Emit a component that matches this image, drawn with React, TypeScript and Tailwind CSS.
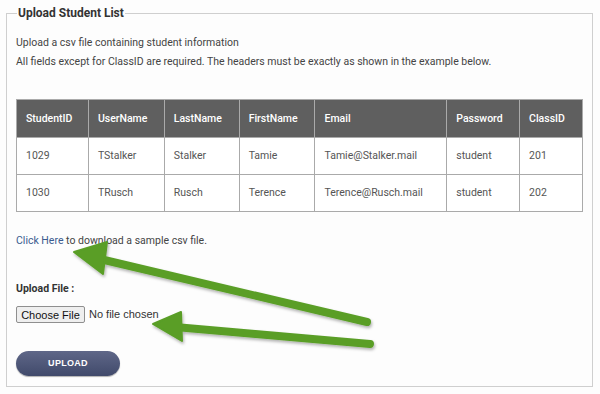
import React from "react";

const headers = ["StudentID", "UserName", "LastName", "FirstName", "Email", "Password", "ClassID"];
const widths = ["w-[72px]", "w-[76px]", "w-[75px]", "w-[76px]", "w-[132px]", "w-[73px]", "w-[63px]"];
const rows = [
  ["1029", "TStalker", "Stalker", "Tamie", "Tamie@Stalker.mail", "student", "201"],
  ["1030", "TRusch", "Rusch", "Terence", "Terence@Rusch.mail", "student", "202"],
];

const Arrows = () => (
  <svg className="absolute inset-0 pointer-events-none" width="600" height="394" viewBox="0 0 600 394">
    <defs>
      <filter id="sh" x="-10%" y="-50%" width="120%" height="200%">
        <feDropShadow dx="1" dy="2" stdDeviation="1.5" floodColor="#000" floodOpacity="0.3" />
      </filter>
    </defs>
    <g fill="#5a9e28" stroke="#5a9e28" strokeLinecap="round" strokeLinejoin="round" filter="url(#sh)">
      <line x1="100" y1="259" x2="367" y2="322" strokeWidth="8" />
      <polygon points="74,252 107,242 103,274" strokeWidth="2" />
      <line x1="175" y1="327" x2="370" y2="344" strokeWidth="8" />
      <polygon points="153,324 181,312 182,341" strokeWidth="2" />
    </g>
  </svg>
);

export default function App() {
  return (
    <div className="relative w-[600px] h-[394px] bg-[#fdfdfd] font-['Roboto',sans-serif] text-[#444]">
      <fieldset className="absolute left-[6px] top-[6px] w-[587px] h-[381px] border border-[#cfcfcf] pl-[9px] pr-[9px] m-0">
        <legend className="ml-[1px] px-[1px] text-[12px] font-bold text-[#333] leading-[14px]">
          Upload Student List
        </legend>
        <p className="mt-[13px] text-[10.5px] leading-[19px]">Upload a csv file containing student information</p>
        <p className="text-[10.5px] leading-[19px]">
          All fields except for ClassID are required. The headers must be exactly as shown in the example below.
        </p>

        <table className="mt-[28px] border-collapse border border-[#aaa] text-[10.5px]">
          <thead>
            <tr className="bg-[#5f5f5f] text-white h-[38px]">
              {headers.map((h, i) => (
                <th key={h} className={`${widths[i]} border border-[#aaa] px-[9px] text-left font-medium`}>
                  {h}
                </th>
              ))}
            </tr>
          </thead>
          <tbody>
            {rows.map((r) => (
              <tr key={r[0]} className="bg-white h-[37px]">
                {r.map((c, i) => (
                  <td key={i} className={`${widths[i]} border border-[#aaa] px-[9px] text-[#555]`}>
                    {c}
                  </td>
                ))}
              </tr>
            ))}
          </tbody>
        </table>

        <p className="mt-[22px] text-[10.5px] leading-[14px]">
          <a className="text-[#3b5b8f]">Click Here</a> to download a sample csv file.
        </p>

        <p className="mt-[34px] text-[10.5px] font-bold text-[#333] leading-[14px]">
          Upload File :
        </p>

        <div className="mt-[10px] flex items-center gap-[4px] font-['Liberation_Sans',sans-serif] text-[11px]">
          <button className="h-[17px] w-[69px] border border-[#8f8f8f] rounded-[2px] bg-[#efefef] text-[#111] leading-[14px]">
            Choose File
          </button>
          <span className="text-[#333]">No file chosen</span>
        </div>

        <button className="mt-[28px] w-[104px] h-[25px] rounded-full bg-gradient-to-b from-[#5f6788] to-[#414a6b] text-white text-[9px] font-bold font-['Liberation_Sans',sans-serif] tracking-[0.3px] shadow-[0_1px_1px_rgba(0,0,0,0.3)]">
          UPLOAD
        </button>
      </fieldset>
      <Arrows />
    </div>
  );
}
